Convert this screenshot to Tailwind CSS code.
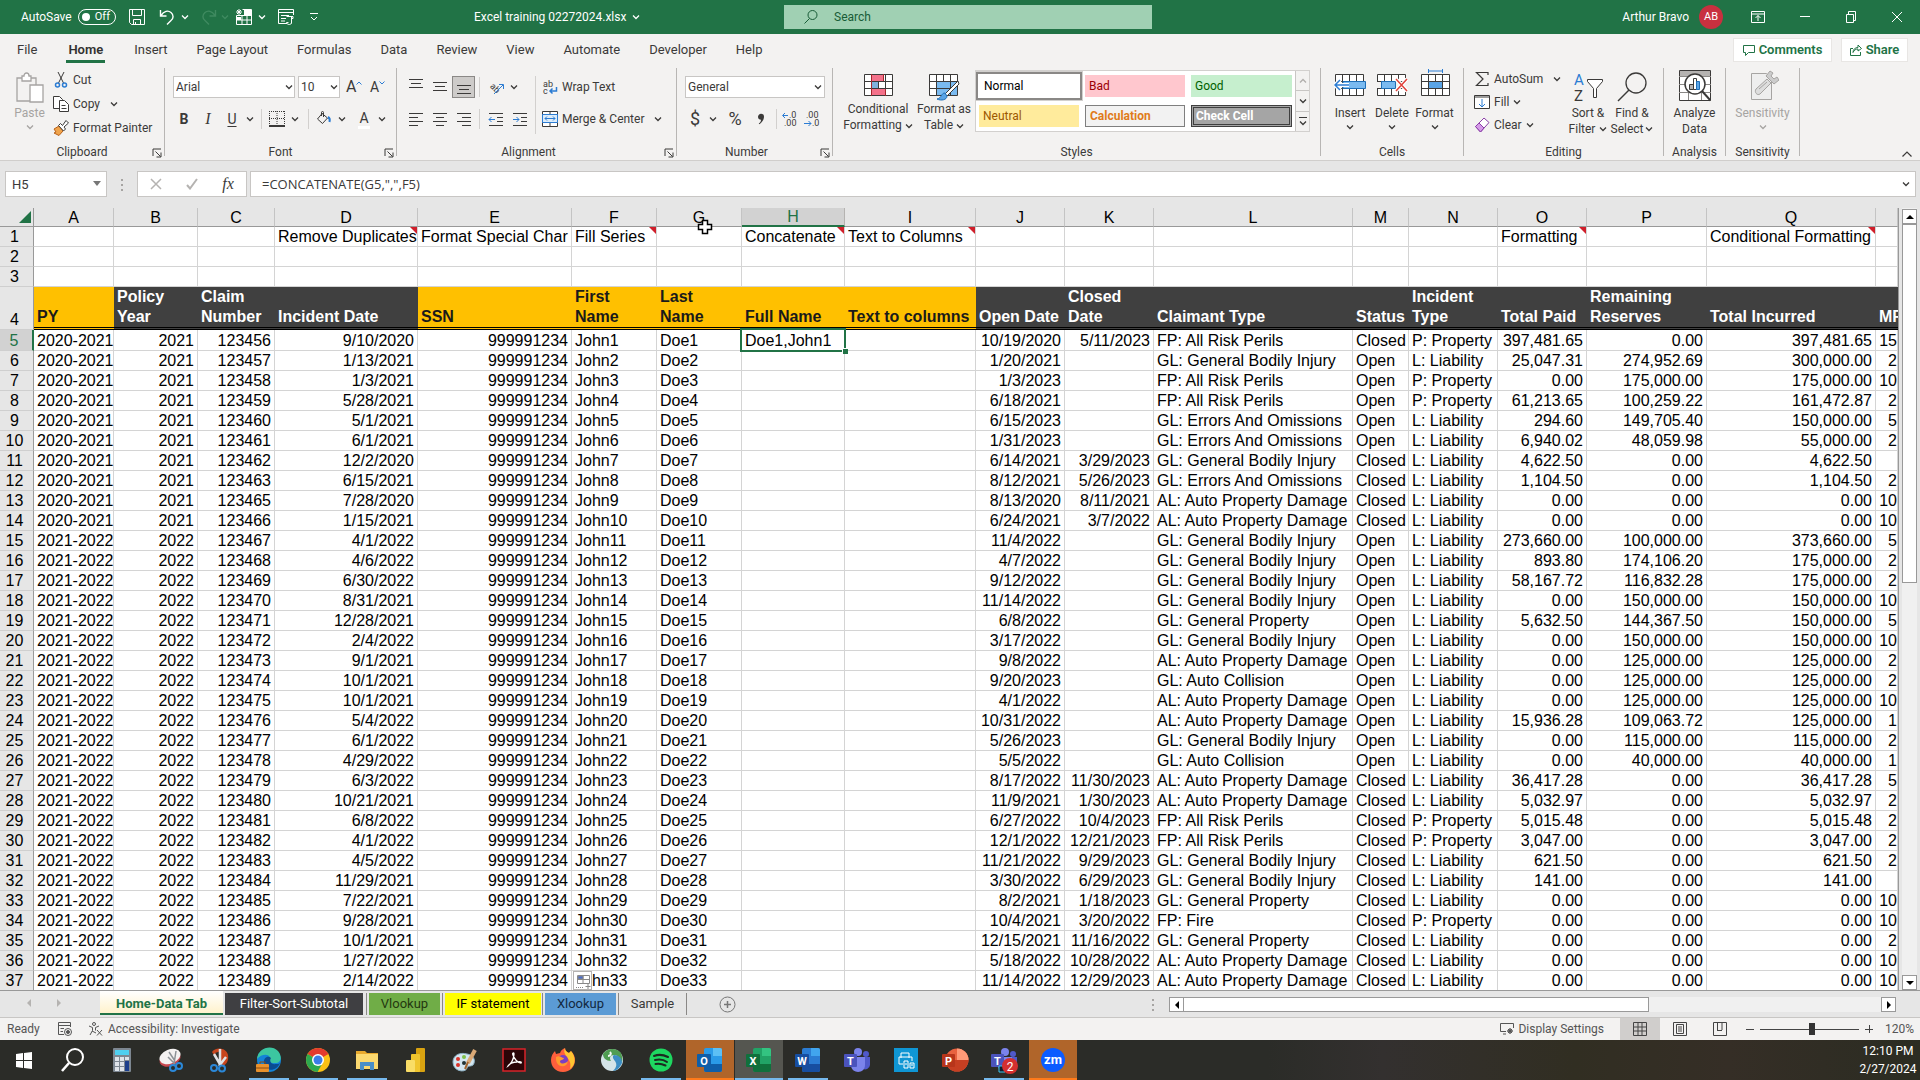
<!DOCTYPE html>
<html lang="en">
<head>
    <meta charset="UTF-8">
    <meta name="viewport" content="width=device-width, initial-scale=1.0">
    <title>Excel training 02272024.xlsx</title>
    <script src="https://cdn.jsdelivr.net/npm/@tailwindcss/browser@4"></script>
</head>
<body class="flex h-screen flex-col overflow-hidden bg-[#e6e6e6] font-[Roboto,'Open_Sans',sans-serif] text-xs text-[#3b3a39]">

    <!-- shared icons -->
    <svg class="hidden">
        <symbol id="chev" viewBox="0 0 8 6"><path d="M1 1.5l3 3 3-3" fill="none" stroke="currentColor" stroke-width="1.3"/></symbol>
        <symbol id="launch" viewBox="0 0 10 10"><path d="M1 8V1h8M3.500 3.500l5 5M9 4.500V9H4.500" fill="none" stroke="currentColor"/></symbol>
        <symbol id="al-left" viewBox="0 0 16 16"><path d="M1 2.500h14M1 6.500h9M1 10.500h14M1 14.500h9" stroke="currentColor"/></symbol>
        <symbol id="al-mid" viewBox="0 0 16 16"><path d="M1 2.500h14M4 6.500h8M1 10.500h14M4 14.500h8" stroke="currentColor"/></symbol>
        <symbol id="al-right" viewBox="0 0 16 16"><path d="M1 2.500h14M6 6.500h9M1 10.500h14M6 14.500h9" stroke="currentColor"/></symbol>
        <symbol id="grid" viewBox="0 0 30 24"><path d="M1.500 1.500h28v21h-28z" fill="#fff" stroke="#3b3a39"/><path d="M1 8.500h29M1 15.500h29M8.500 1v22M15.500 1v22M22.500 1v22" stroke="#3b3a39"/></symbol>
    </svg>

    <!-- title bar -->
    <header class="flex h-[34px] shrink-0 items-center bg-[#217346] text-white">
        <div class="flex w-[474px] items-center pl-[21px]">
            <label for="autosave" class="w-[57px]">AutoSave</label>
            <span class="relative flex h-4 w-[38px] items-center justify-end pr-1.5 text-[11px]">
                <input id="autosave" type="checkbox" role="switch" class="absolute inset-0 appearance-none rounded-full border border-white">
                <span class="absolute left-1 size-2 rounded-full bg-white"></span>Off
            </span>
            <button aria-label="Save" class="ml-[13px]"><svg class="size-4" viewBox="0 0 16 16" fill="none" stroke="#fff"><path d="M.5.5h15v15H2.500l-2-2zM3.500.5v6h9v-6M4.500 15.500v-5h7v5M6.500 13v2"/></svg></button>
            <button aria-label="Undo" class="ml-3.5"><svg class="size-4" viewBox="0 0 16 16" fill="none" stroke="#fff" stroke-width="1.4"><path d="M1.500 1v6h6M2 6.500C5 2 9 1 12 3.500s2.500 6 0 8L8 15.500"/></svg></button>
            <svg class="ml-1.5 h-1.5 w-2"><use href="#chev"/></svg>
            <button aria-label="Redo" disabled class="ml-3 text-[#3f8a60]"><svg class="size-4" viewBox="0 0 16 16" fill="none" stroke="currentColor" stroke-width="1.4"><path d="M14.500 1v6h-6M14 6.500C11 2 7 1 4 3.500s-2.500 6 0 8l4 4"/></svg></button>
            <svg class="ml-1 h-1.5 w-2 text-[#3f8a60]"><use href="#chev"/></svg>
            <button aria-label="Freeze panes" class="ml-[7px]"><svg class="size-4" viewBox="0 0 16 16" fill="none" stroke="#fff"><path d="M6.500.5h9v15h-15v-9h15M.5 11h15M6 6v9.500M11 6v9.500"/><path d="M8 1h7v5H8zM1 8h4v3H1z" fill="#fff" stroke="none"/><path d="M3 0v6M0 3h6M1 1l4 4M5 1L1 5"/></svg></button>
            <svg class="ml-1.5 h-1.5 w-2"><use href="#chev"/></svg>
            <button aria-label="Form" class="ml-3"><svg class="size-4" viewBox="0 0 16 16" fill="none" stroke="#fff"><path d="M9 14.500H.5V.5h15V6M.5 3.500h15M3 6.500h8M3 9.500h5M3 12h4M3 6v0M8.500 7.500h5v7l-2 1c-2 0-3-1-3-2h2M12 7.500h3v2h-2"/></svg></button>
            <button aria-label="Customize toolbar" class="ml-4"><svg class="h-2.5 w-2" viewBox="0 0 8 10" fill="none" stroke="#fff"><path d="M0 1.500h8M1 5l3 3 3-3"/></svg></button>
        </div>
        <button class="flex w-[310px] items-center gap-1.5">Excel training 02272024.xlsx <svg class="h-1.5 w-2"><use href="#chev"/></svg></button>
        <label class="flex h-6 w-[368px] items-center bg-[#a0d0b3] pl-5 text-[#185c37]">
            <svg class="mr-4 size-3.5" viewBox="0 0 14 14" fill="none" stroke="currentColor"><circle cx="8.500" cy="5" r="4.500"/><path d="M5.500 8.500L.5 13.500"/></svg>
            <input type="text" aria-label="Search" placeholder="Search" class="w-60 bg-transparent placeholder:text-[#185c37]">
        </label>
        <div class="ml-auto flex items-center">
            <span>Arthur Bravo</span>
            <span class="ml-2.5 flex size-6 items-center justify-center rounded-full bg-[#c8303f] text-[11px]">AB</span>
            <button aria-label="Ribbon display" class="ml-7"><svg class="h-3 w-3.5" viewBox="0 0 14 12" fill="none" stroke="#fff"><path d="M.5.5h13v11H.5zM.5 3h13M7 10V4.500M4.500 7L7 4.500 9.500 7"/></svg></button>
            <button aria-label="Minimize" class="ml-[35px]"><svg class="h-3 w-2.5" viewBox="0 0 10 12" stroke="#fff"><path d="M0 5.500h10"/></svg></button>
            <button aria-label="Restore" class="ml-9"><svg class="h-3 w-2.5" viewBox="0 0 10 12" fill="none" stroke="#fff"><path d="M.5 3.500h7v8h-7zM2.500 3V.5h7v9H8"/></svg></button>
            <button aria-label="Close" class="mr-[18px] ml-9"><svg class="h-3 w-2.5" viewBox="0 0 10 12" stroke="#fff"><path d="M0 1l10 10M10 1L0 11"/></svg></button>
        </div>
    </header>

    <!-- ribbon tabs -->
    <nav class="flex h-[34px] shrink-0 items-center bg-[#f3f2f1] pb-0.5 pl-[17px] text-[13px]">
        <div class="flex items-center gap-[29px]">
            <a href="#">File</a>
            <a href="#" class="relative px-0.5 font-semibold text-[#323130]">Home<span class="absolute inset-x-0 -bottom-1 h-[3px] bg-[#217346]"></span></a>
            <a href="#">Insert</a>
            <a href="#">Page Layout</a>
            <a href="#">Formulas</a>
            <a href="#">Data</a>
            <a href="#">Review</a>
            <a href="#">View</a>
            <a href="#">Automate</a>
            <a href="#">Developer</a>
            <a href="#">Help</a>
        </div>
        <div class="mr-3 ml-auto flex gap-[9px] font-semibold text-[#217346]">
            <button class="flex h-6 w-[99px] items-center justify-center gap-1 border border-[#e8e6e4] bg-white"><svg class="size-3" viewBox="0 0 12 12" fill="none" stroke="currentColor"><path d="M.5 1.500h11v7h-6l-3 3v-3h-2z"/></svg>Comments</button>
            <button class="flex h-6 w-[67px] items-center justify-center gap-1 border border-[#e8e6e4] bg-white"><svg class="size-3" viewBox="0 0 12 12" fill="none" stroke="currentColor"><path d="M3 4.500H.5v7h10V8M3 8.500c0-3 2-5 5-5V1l3.500 3.500L8 7V5C6 5 4 6 3 8.500"/></svg>Share</button>
        </div>
    </nav>

    <!-- ribbon -->
    <section class="relative flex h-[93px] shrink-0 border-b border-[#d0cecc] bg-[#f3f2f1]">
        <!-- clipboard -->
        <div class="flex w-[164px] flex-col">
            <div class="flex h-[76px] pl-[14px]">
                <button disabled class="flex w-[31px] flex-col items-center pt-1 text-[#a6a4a2]">
                    <svg class="h-8 w-7" viewBox="0 0 28 32" fill="#f3f2f1" stroke="currentColor" stroke-width="1.300"><path d="M1 6h19v23H1z"/><path d="M6 9V4h2c0-4 5-4 5 0h2v5z" fill="#fff"/><path d="M14 13h13v17H14z" fill="#fff"/></svg>
                    <span class="mt-px">Paste</span>
                    <svg class="mt-[3px] h-1.5 w-2"><use href="#chev"/></svg>
                </button>
                <div class="ml-2 flex flex-col">
                    <button class="flex h-6 items-center"><svg class="mr-1 h-4 w-4" viewBox="0 0 16 16" fill="none" stroke="#3b3a39"><path d="M5 0l5.500 11M11 0L5.500 11"/><g stroke="#2b7cd3" stroke-width="1.500"><circle cx="4.500" cy="13" r="2"/><circle cx="11.500" cy="13" r="2"/></g></svg>Cut</button>
                    <button class="flex h-6 items-center"><svg class="mr-1 h-4 w-4" viewBox="0 0 16 16" fill="#fff" stroke="#3b3a39"><path d="M.5.5h6l3 3v9h-9z"/><path d="M6.500 4.500h5l4 4v7h-9zM8.500 9.500h4M8.500 12.500h5"/></svg>Copy<svg class="ml-2.5 h-1.5 w-2"><use href="#chev"/></svg></button>
                    <button class="flex h-6 items-center"><svg class="mr-1 h-4 w-4" viewBox="0 0 16 16"><path d="M1 9l5-3 4 5-4 4.500L1 13l2-1z" fill="#f0a44c" stroke="#b7621b"/><path d="M5.500 5.500l2-2 2 2 3.500-5L15.500 3 11 7l1.500 2-2 2z" fill="#fff" stroke="#3b3a39"/></svg>Format Painter</button>
                </div>
            </div>
            <div class="relative text-center leading-4">Clipboard<svg class="absolute top-1 right-0.5 size-2.5"><use href="#launch"/></svg></div>
        </div>
        <span class="h-[88px] w-px bg-[#b8b6b4]"></span>

        <!-- font -->
        <div class="flex w-[231px] flex-col">
            <div class="h-[76px] pt-2">
                <div class="flex items-center pl-2">
                    <span class="relative"><select aria-label="Font" class="block h-[22px] w-[122px] appearance-none border border-[#c8c6c4] bg-white px-0.5"><option>Arial</option></select><svg class="absolute top-2 right-0.5 h-1.5 w-2"><use href="#chev"/></svg></span>
                    <span class="relative ml-[3px]"><select aria-label="Font size" class="block h-[22px] w-[42px] appearance-none border border-[#c8c6c4] bg-white px-0.5"><option>10</option></select><svg class="absolute top-2 right-0.5 h-1.5 w-2"><use href="#chev"/></svg></span>
                    <button aria-label="Increase font size" class="ml-1.5 flex w-5 text-base leading-5">A<svg class="mt-1 h-1 w-1.5" viewBox="0 0 6 4" fill="none" stroke="#2b7cd3"><path d="M.5 3.500L3 1l2.500 2.500"/></svg></button>
                    <button aria-label="Decrease font size" class="ml-1 flex w-5 text-sm leading-5">A<svg class="mt-1 h-1 w-1.5" viewBox="0 0 6 4" fill="none" stroke="#2b7cd3"><path d="M.5.5L3 3 5.500.5"/></svg></button>
                </div>
                <div class="mt-[9px] flex h-6 items-center pl-[7px]">
                    <button class="w-6 text-sm font-bold">B</button>
                    <button class="w-6 font-['Liberation_Serif',serif] text-base italic">I</button>
                    <button class="w-6 text-sm underline underline-offset-2">U</button>
                    <svg class="h-1.5 w-3"><use href="#chev"/></svg>
                    <span class="mx-[5px] h-5 w-px bg-[#d2d0ce]"></span>
                    <button aria-label="Borders" class="flex w-5 justify-center"><svg class="size-4" viewBox="0 0 16 16" stroke="#3b3a39" fill="none"><path d="M.5 0v14M15.500 0v14M8 0v14M0 .5h16M0 7.500h16" stroke-dasharray="1 1"/><path d="M0 15h16" stroke-width="2"/></svg></button>
                    <svg class="h-1.5 w-4"><use href="#chev"/></svg>
                    <span class="mx-[5px] h-5 w-px bg-[#d2d0ce]"></span>
                    <button aria-label="Fill color" class="flex w-5 justify-center"><svg class="size-4" viewBox="0 0 16 16" fill="none" stroke="#3b3a39"><path d="M5.500 2l6 5-5 5.500L1.500 8l5-6M5.500 5V1.500c0-1.500 2-1.500 2 0V6"/><path d="M12 6c2 1 2 3 1.500 5" stroke="#2b7cd3" stroke-width="2"/></svg></button>
                    <svg class="h-1.5 w-4"><use href="#chev"/></svg>
                    <button aria-label="Font color" class="ml-1 flex w-5 flex-col items-center text-sm leading-4">A<span class="h-[3px] w-3 bg-white"></span></button>
                    <svg class="h-1.5 w-4"><use href="#chev"/></svg>
                </div>
            </div>
            <div class="relative pl-4 pr-4 text-center leading-4">Font<svg class="absolute top-1 right-0.5 size-2.5"><use href="#launch"/></svg></div>
        </div>
        <span class="h-[88px] w-px bg-[#b8b6b4]"></span>

        <!-- alignment -->
        <div class="flex w-[279px] flex-col">
            <div class="flex h-[76px] pt-2 pl-[7px]">
                <div class="flex flex-col">
                    <div class="flex h-[22px] items-center">
                        <button aria-label="Top align" class="flex h-full w-6 justify-center"><svg class="size-4" viewBox="0 0 16 16" stroke="currentColor"><path d="M1 3.500h14M3 7.500h10M1 11.500h14"/></svg></button>
                        <button aria-label="Middle align" class="flex h-full w-6 items-center justify-center"><svg class="size-4" viewBox="0 0 16 16" stroke="currentColor"><path d="M1 3.500h14M3 7.500h10M1 11.500h14"/></svg></button>
                        <button aria-label="Bottom align" class="flex h-full w-[23px] items-end justify-center border border-[#8a8886] bg-[#cdcbc9]"><svg class="size-4" viewBox="0 0 16 16" stroke="currentColor"><path d="M1 4.500h14M3 8.500h10M1 12.500h14"/></svg></button>
                        <span class="mx-1 h-5 w-px bg-[#d2d0ce]"></span>
                        <button aria-label="Orientation" class="flex w-6 justify-center"><svg class="h-5 w-[18px]" viewBox="0 0 18 20"><text x="4" y="12" font-size="9" transform="rotate(45 6 9)" fill="#3b3a39">ab</text><path d="M7 17L16 8M12 7.500h4.500V12" fill="none" stroke="#2b7cd3"/></svg></button>
                        <svg class="h-1.5 w-3"><use href="#chev"/></svg>
                    </div>
                    <div class="mt-[9px] flex h-6 items-center">
                        <button aria-label="Align left" class="flex w-6 justify-center"><svg class="size-4"><use href="#al-left"/></svg></button>
                        <button aria-label="Center" class="flex w-6 justify-center"><svg class="size-4"><use href="#al-mid"/></svg></button>
                        <button aria-label="Align right" class="flex w-[23px] justify-center"><svg class="size-4"><use href="#al-right"/></svg></button>
                        <span class="mx-1 h-5 w-px bg-[#d2d0ce]"></span>
                        <button aria-label="Decrease indent" class="flex w-6 justify-center"><svg class="size-4" viewBox="0 0 16 16" fill="none" stroke="currentColor"><path d="M1 2.500h14M9 6.500h6M9 10.500h6M1 14.500h14"/><path d="M7 8.500H1M3.500 6L1 8.500 3.500 11" stroke="#2b7cd3"/></svg></button>
                        <button aria-label="Increase indent" class="flex w-6 justify-center"><svg class="size-4" viewBox="0 0 16 16" fill="none" stroke="currentColor"><path d="M1 2.500h14M9 6.500h6M9 10.500h6M1 14.500h14"/><path d="M1 8.500h6M4.500 6L7 8.500 4.500 11" stroke="#2b7cd3"/></svg></button>
                    </div>
                </div>
                <span class="mr-1.5 ml-[3px] h-[58px] w-px bg-[#d2d0ce]"></span>
                <div class="flex flex-col">
                    <button class="flex h-[22px] items-center"><svg class="mr-1 h-5 w-4" viewBox="0 0 16 20"><text x="1" y="10" font-size="9" fill="#3b3a39">ab</text><text x="1" y="17" font-size="9" fill="#3b3a39">c</text><path d="M14.500 10v4H8M10.500 11.500L8 14l2.500 2.500" fill="none" stroke="#2b7cd3" stroke-width="1.500"/></svg>Wrap Text</button>
                    <button class="mt-[9px] flex h-6 items-center"><svg class="mr-1 size-4" viewBox="0 0 16 16" fill="#fff" stroke="#3b3a39"><path d="M.5.5h15v15H.5zM8 0v16"/><path d="M.5 3.500h15v8H.5z" stroke="#2b7cd3" fill="#dcecfa"/><path d="M3 7.500h10M5 5.500l-2 2 2 2M11 5.500l2 2-2 2" stroke="#2b7cd3" fill="none"/></svg>Merge &amp; Center<svg class="ml-2.5 h-1.5 w-2"><use href="#chev"/></svg></button>
                </div>
            </div>
            <div class="relative pr-4 text-center leading-4">Alignment<svg class="absolute top-1 right-0.5 size-2.5"><use href="#launch"/></svg></div>
        </div>
        <span class="h-[88px] w-px bg-[#b8b6b4]"></span>

        <!-- number -->
        <div class="flex w-[155px] flex-col">
            <div class="h-[76px] pt-2 pl-2">
                <span class="relative block w-[140px]"><select aria-label="Number format" class="block h-[22px] w-full appearance-none border border-[#c8c6c4] bg-white px-0.5"><option>General</option></select><svg class="absolute top-2 right-[3px] h-1.5 w-2"><use href="#chev"/></svg></span>
                <div class="mt-[9px] flex h-6 items-center text-lg">
                    <button class="w-5">$</button>
                    <svg class="h-1.5 w-4"><use href="#chev"/></svg>
                    <button class="ml-1 w-5">%</button>
                    <button aria-label="Comma style" class="ml-1 flex w-6 justify-center"><svg class="h-3 w-1.5" viewBox="0 0 8 14" fill="#3b3a39"><path d="M4 0c3 0 4 2 4 4 0 4-3 8-6 10l-1-1c2-1 3-3 3-5C2 8 0 7 0 4c0-2 2-4 4-4z"/></svg></button>
                    <span class="mr-1 ml-[3px] h-5 w-px bg-[#d2d0ce]"></span>
                    <button aria-label="Increase decimal" class="w-[22px]"><svg class="h-5 w-5" viewBox="0 0 20 20"><path d="M7 6.500H2M4 4L1.500 6.500 4 9" fill="none" stroke="#2b7cd3"/><text x="8" y="9" font-size="9" fill="#3b3a39">.0</text><text x="3" y="17" font-size="9" fill="#3b3a39">.00</text></svg></button>
                    <button aria-label="Decrease decimal" class="w-[22px]"><svg class="h-5 w-5" viewBox="0 0 20 20"><path d="M1 14.500h7M5.500 12L8 14.500 5.500 17" fill="none" stroke="#2b7cd3"/><text x="3" y="9" font-size="9" fill="#3b3a39">.00</text><text x="9" y="17" font-size="9" fill="#3b3a39">.0</text></svg></button>
                </div>
            </div>
            <div class="relative pr-4 text-center leading-4">Number<svg class="absolute top-1 right-0.5 size-2.5"><use href="#launch"/></svg></div>
        </div>
        <span class="h-[88px] w-px bg-[#b8b6b4]"></span>

        <!-- styles -->
        <div class="flex w-[487px] flex-col">
            <div class="flex h-[76px]">
                <button class="ml-2.5 flex w-[70px] flex-col items-center pt-[5px] leading-4">
                    <svg class="mb-1 h-6 w-[30px] shrink-0" viewBox="0 0 30 24"><use href="#grid"/><path d="M8 2h12v6H8zM8 16h14v6H8z" fill="#f4718a"/><path d="M8 9h7v6H8z" fill="#7fb2dd"/><path d="M8.500 1v22M20.500 1v7M22.500 16v7" stroke="#a4262c"/></svg>
                    <span>Conditional Formatting <svg class="inline h-1.5 w-2"><use href="#chev"/></svg></span>
                </button>
                <button class="flex w-[62px] flex-col items-center pt-[5px] leading-4">
                    <svg class="h-7 w-8 shrink-0" viewBox="0 0 32 28"><use href="#grid" width="30" height="24"/><path d="M9 9h13v6H9zM9 16h13v6H9zM23 9h6v13h-6z" fill="#7abaf0"/><path d="M30 8L17 21l2 2L31 11z" fill="#fff" stroke="#3b3a39"/><path d="M17 20c-4 0-3 5-8 6 4 2 10 1 10-3z" fill="#5aa4e6" stroke="#1e6fb8"/></svg>
                    <span>Format as Table <svg class="inline h-1.5 w-2"><use href="#chev"/></svg></span>
                </button>
                <div class="mt-0.5 flex h-[62px] border border-[#d2d0ce] bg-white">
                    <div class="grid grid-cols-[106px_106px_107px] grid-rows-[30px_30px] items-center text-left">
                        <button class="h-7 border-2 border-[#8a8886] px-1.5 text-left text-black outline outline-[#d2d0ce]">Normal</button>
                        <button class="mx-[3px] h-[22px] bg-[#ffc7ce] px-1 text-left text-[#9c0006]">Bad</button>
                        <button class="mx-[3px] h-[22px] bg-[#c6efce] px-1 text-left text-[#006100]">Good</button>
                        <button class="mx-[3px] h-[22px] bg-[#ffeb9c] px-1 text-left text-[#9c5700]">Neutral</button>
                        <button class="mx-[3px] h-[22px] border border-[#7f7f7f] bg-[#f2f2f2] px-1 text-left font-bold text-[#e07b1a]">Calculation</button>
                        <button class="mx-[3px] h-[22px] border-[3px] border-double border-[#3f3f3f] bg-[#a5a5a5] px-0.5 text-left leading-4 font-bold text-white">Check Cell</button>
                    </div>
                    <div class="flex w-[14px] flex-col border-l border-[#c8c6c4]">
                        <button aria-label="Row up" class="flex flex-1 items-center justify-center bg-[#f3f2f1] text-[#b0aeac]"><svg class="h-1.5 w-2 rotate-180"><use href="#chev"/></svg></button>
                        <button aria-label="Row down" class="flex flex-1 items-center justify-center border-y border-[#c8c6c4] bg-[#f3f2f1]"><svg class="h-1.5 w-2"><use href="#chev"/></svg></button>
                        <button aria-label="More styles" class="flex flex-1 flex-col items-center justify-center bg-[#f3f2f1]"><span class="mb-0.5 h-px w-2 bg-[#3b3a39]"></span><svg class="h-1.5 w-2"><use href="#chev"/></svg></button>
                    </div>
                </div>
            </div>
            <div class="text-center leading-4">Styles</div>
        </div>
        <span class="h-[88px] w-px bg-[#b8b6b4]"></span>

        <!-- cells -->
        <div class="flex w-[142px] flex-col">
            <div class="flex h-[76px] pl-2 leading-4">
                <button class="flex w-[42px] flex-col items-center pt-[5px]"><svg class="mb-2 h-6 w-8" viewBox="0 0 32 24"><use href="#grid" width="30" height="24"/><path d="M9 8.500h22.500v7H9z" fill="#7abaf0" stroke="#1e6fb8"/><path d="M15 12H1M6 7l-5 5 5 5" fill="none" stroke="#fff" stroke-width="4"/><path d="M15 12H1M6 7l-5 5 5 5" fill="none" stroke="#2b7cd3" stroke-width="1.500"/></svg>Insert<svg class="mt-[3px] h-1.5 w-2"><use href="#chev"/></svg></button>
                <button class="flex w-[42px] flex-col items-center pt-[5px]"><svg class="mb-2 h-6 w-8" viewBox="0 0 32 24"><use href="#grid" width="30" height="24"/><path d="M0 9h32v6H0z" fill="#f3f2f1"/><path d="M5.500 8.500h14v7h-14z" fill="#7abaf0" stroke="#1e6fb8"/><path d="M20 6l11 12M31 6L20 18" stroke="#fff" stroke-width="4"/><path d="M20 6l11 12M31 6L20 18" stroke="#e0413a" stroke-width="1.500"/></svg>Delete<svg class="mt-[3px] h-1.5 w-2"><use href="#chev"/></svg></button>
                <button class="flex w-[43px] flex-col items-center"><svg class="mb-2 h-[29px] w-[30px]" viewBox="0 0 30 29"><path d="M8.500 1v4M22.500 1v4M8 3h15" stroke="#2b7cd3"/><use href="#grid" y="5" width="30" height="24"/><path d="M9 14h13v6H9z" fill="#5aa4e6"/></svg>Format<svg class="mt-[3px] h-1.5 w-2"><use href="#chev"/></svg></button>
            </div>
            <div class="text-center leading-4">Cells</div>
        </div>
        <span class="h-[88px] w-px bg-[#b8b6b4]"></span>

        <!-- editing -->
        <div class="flex w-[199px] flex-col">
            <div class="flex h-[76px] pl-2.5 leading-4">
                <div class="flex w-[92px] flex-col">
                    <button class="flex h-[22px] items-center"><svg class="mr-1 size-4" viewBox="0 0 16 16" fill="none" stroke="currentColor" stroke-width="1.200"><path d="M14 4V1.500H2.500L9 8l-6.500 6.500H14V12"/></svg>AutoSum<svg class="ml-2.5 h-1.5 w-2"><use href="#chev"/></svg></button>
                    <button class="flex h-6 items-center"><svg class="mr-1 size-4" viewBox="0 0 16 16" fill="#fff" stroke="currentColor"><path d="M.5 1.500h15v13H.5zM0 3h16"/><path d="M8 5v8M5 10l3 3 3-3" fill="none" stroke="#2b7cd3"/></svg>Fill<svg class="ml-1 h-1.5 w-2"><use href="#chev"/></svg></button>
                    <button class="flex h-[22px] items-center"><svg class="mr-1 size-4" viewBox="0 0 16 16" fill="#fff" stroke="#8a3ea8"><path d="M1.500 9.500L10 1l5 4.500-8.500 9.500z"/><path d="M1.500 9.500L5 6l5 5-3.500 4z" fill="#d59be8"/></svg>Clear<svg class="ml-1 h-1.5 w-2"><use href="#chev"/></svg></button>
                </div>
                <button class="flex w-[44px] flex-col items-center pt-1"><svg class="mb-[3px] h-[30px] w-8 shrink-0" viewBox="0 0 32 30"><text x="2" y="13" font-size="15" fill="#2b7cd3">A</text><text x="2" y="29" font-size="15" fill="#3b3a39">Z</text><path d="M15.500 7.500h15v2l-6 7v9h-3v-9l-6-7z" fill="#fff" stroke="#3b3a39"/></svg><span class="text-nowrap">Sort &amp;</span><span class="flex items-center gap-1">Filter <svg class="h-1.5 w-2"><use href="#chev"/></svg></span></button>
                <button class="flex w-[44px] flex-col items-center pt-1"><svg class="mb-[3px] h-[30px] w-8 shrink-0" viewBox="0 0 32 30" fill="none" stroke="#3b3a39"><circle cx="20" cy="11" r="10" stroke-width="1.300"/><path d="M13 18L2 29" stroke-width="1.500"/></svg><span class="text-nowrap">Find &amp;</span><span class="flex items-center gap-0.5">Select <svg class="h-1.5 w-2"><use href="#chev"/></svg></span></button>
            </div>
            <div class="text-center leading-4">Editing</div>
        </div>
        <span class="h-[88px] w-px bg-[#b8b6b4]"></span>

        <!-- analysis -->
        <div class="flex w-[61px] flex-col">
            <button class="flex h-[76px] flex-col items-center pt-0.5 leading-4"><svg class="mb-[3px] h-8 w-8 shrink-0" viewBox="0 0 32 32"><path d="M.5.5h31v30H.5z" fill="#fff" stroke="#3b3a39"/><path d="M1 1h30v5H1z" fill="#b5b3b1"/><path d="M0 6.500h32M0 14.500h32M0 22.500h32M9.500 6v24M22.500 6v24" stroke="#8a8886"/><circle cx="16" cy="14" r="10" fill="#fff" stroke="#3b3a39" stroke-width="1.500"/><path d="M10.500 14.500h4v5h-4z" fill="#b5b3b1" stroke="#3b3a39"/><path d="M14.500 8.500h3v11h-3z" fill="#fff" stroke="#3b3a39"/><path d="M17.500 11.500h3v8h-3z" fill="#5aa4e6" stroke="#1e6fb8"/><path d="M23 21l8.500 9.500" stroke="#3b3a39" stroke-width="2"/></svg><span>Analyze<br>Data</span></button>
            <div class="text-center leading-4">Analysis</div>
        </div>
        <span class="h-[88px] w-px bg-[#b8b6b4]"></span>

        <!-- sensitivity -->
        <div class="flex w-[73px] flex-col">
            <button disabled class="flex h-[76px] flex-col items-center pt-0.5 leading-4 text-[#a6a4a2]"><svg class="mb-[3px] h-8 w-8" viewBox="0 0 32 32" fill="#eee" stroke="currentColor"><path d="M4.500 3.500h15l5 5v21h-20z"/><path d="M9 19l11-10 4 4-11 11c-3 2-6-2-4-5zM12 19l8-7" fill="#ddd"/><path d="M19 6l4-5 3 2-2 3 3 3 3-2 2 3-5 4z" fill="#ccc"/></svg>Sensitivity<svg class="mt-[3px] h-1.5 w-2"><use href="#chev"/></svg></button>
            <div class="text-center leading-4">Sensitivity</div>
        </div>
        <span class="h-[88px] w-px bg-[#b8b6b4]"></span>
        <button aria-label="Collapse ribbon" class="mt-auto mr-2 mb-0.5 ml-auto"><svg class="h-2 w-2.5" viewBox="0 0 10 8" fill="none" stroke="currentColor" stroke-width="1.200"><path d="M.5 6.500L5 2l4.500 4.500"/></svg></button>
    </section>

    <!-- formula bar -->
    <section class="flex h-[47px] shrink-0 items-start pt-2.5 pr-1 pl-[5px] text-[13px]">
        <div class="relative">
            <input type="text" aria-label="Name box" value="H5" class="block h-[26px] w-[102px] border border-[#c8c6c4] bg-white px-1.5">
            <svg class="absolute top-2.5 right-1.5 h-1.5 w-2" viewBox="0 0 8 6" fill="#777"><path d="M0 0h8L4 5z"/></svg>
        </div>
        <svg class="mx-3.5 mt-2 h-3 w-0.5" viewBox="0 0 2 12" fill="#a6a4a2"><path d="M0 0h2v2H0zM0 5h2v2H0zM0 10h2v2H0z"/></svg>
        <div class="flex h-[26px] w-[110px] items-center justify-around border border-[#c8c6c4] bg-white">
            <button aria-label="Cancel"><svg class="size-3" viewBox="0 0 12 12" stroke="#b5b3b1" stroke-width="1.500"><path d="M1 1l10 10M11 1L1 11"/></svg></button>
            <button aria-label="Enter"><svg class="size-3" viewBox="0 0 12 12" fill="none" stroke="#b5b3b1" stroke-width="2"><path d="M1 7l3 3.500L11 1"/></svg></button>
            <button class="font-['Liberation_Serif',serif] text-base leading-5 italic">fx</button>
        </div>
        <div class="relative ml-[3px] flex-1">
            <input type="text" aria-label="Formula" value='=CONCATENATE(G5,",",F5)' class="block h-[26px] w-full border border-[#c8c6c4] bg-white px-[11px] font-['Open_Sans',sans-serif]">
            <svg class="absolute top-2.5 right-1.5 h-1.5 w-2 stroke-2"><use href="#chev"/></svg>
        </div>
    </section>

    <!-- worksheet -->
    <main class="relative flex min-h-0 flex-1 border-b border-[#999]">
        <div class="min-w-0 flex-1 overflow-hidden border-r border-[#999] font-['Liberation_Sans',Arial,sans-serif] text-base text-black">
            <table class="w-full table-fixed border-separate border-spacing-0">
                <colgroup>
                    <col class="w-[34px]"><col class="w-[80px]"><col class="w-[84px]"><col class="w-[77px]"><col class="w-[143px]"><col class="w-[154px]"><col class="w-[85px]"><col class="w-[85px]"><col class="w-[103px]"><col class="w-[131px]"><col class="w-[89px]"><col class="w-[89px]"><col class="w-[199px]"><col class="w-[56px]"><col class="w-[89px]"><col class="w-[89px]"><col class="w-[120px]"><col class="w-[169px]"><col>
                </colgroup>
                <thead id="letters"></thead>
                <tbody id="cells"></tbody>
            </table>
        </div>
        <div class="mx-[3px] flex w-[15px] flex-col bg-[#f0f0f0] pt-px">
            <button aria-label="Scroll up" class="flex h-[15px] items-center justify-center border border-[#999] bg-white"><svg class="h-1.5 w-2" viewBox="0 0 8 6"><path d="M0 5h8L4 1z"/></svg></button>
            <span class="h-[46%] border border-[#999] bg-white"></span>
            <button aria-label="Scroll down" class="mt-auto flex h-[15px] items-center justify-center border border-[#999] bg-white"><svg class="h-1.5 w-2" viewBox="0 0 8 6"><path d="M0 1h8L4 5z"/></svg></button>
        </div>
        <svg class="absolute top-[11px] left-[697px] size-4" viewBox="0 0 16 16" fill="#fff" stroke="#000" stroke-width="1.500"><path d="M5.500 1.500h5v4h4v5h-4v4h-5v-4h-4v-5h4z"/></svg>
    </main>

    <!-- sheet tabs -->
    <section class="flex h-[27px] shrink-0 items-start border-b border-[#c8c6c4] text-[13px] leading-[22px]">
        <div class="flex w-[100px] gap-5 pt-2 pl-[26px]">
            <svg class="h-2 w-2" viewBox="0 0 8 8" fill="#b5b3b1"><path d="M5 0v8L1 4z"/></svg>
            <svg class="h-2 w-2" viewBox="0 0 8 8" fill="#b5b3b1"><path d="M3 0v8l4-4z"/></svg>
        </div>
        <button class="h-6 w-[123px] border-b-2 border-[#217346] bg-linear-to-b from-white to-[#fff2cc] pt-0.5 font-bold text-[#217346]">Home-Data Tab</button>
        <button class="mt-0.5 mr-[3px] ml-0.5 h-[22px] w-[138px] bg-[#3f3f42] text-white">Filter-Sort-Subtotal</button>
        <button class="mt-0.5 h-[22px] border-l border-[#8a8886] pl-0.5 text-[#24380f]"><span class="block w-[71px] bg-[#70ad47]">Vlookup</span></button>
        <button class="mt-0.5 ml-0.5 h-[22px] border-l border-[#8a8886] pl-0.5 text-black"><span class="block w-[96px] bg-[#ffff00]">IF statement</span></button>
        <button class="mt-0.5 ml-px h-[22px] border-l border-[#8a8886] pl-0.5 text-[#12283f]"><span class="block w-[71px] bg-[#5b9bd5]">Xlookup</span></button>
        <button class="mt-0.5 ml-0.5 h-[22px] w-[69px] border-x border-[#8a8886]">Sample</button>
        <button aria-label="New sheet" class="mt-[5px] ml-8"><svg class="size-[17px]" viewBox="0 0 17 17" fill="none" stroke="#777"><circle cx="8.500" cy="8.500" r="7.500"/><path d="M8.500 5v7M5 8.500h7" stroke-width="1.500"/></svg></button>
        <svg class="mt-2 mr-[15px] ml-auto h-3 w-0.5" viewBox="0 0 2 12" fill="#a6a4a2"><path d="M0 0h2v2H0zM0 5h2v2H0zM0 10h2v2H0z"/></svg>
        <div class="mt-1.5 mr-6 flex h-[15px] w-[727px] bg-[#f0f0f0]">
            <button aria-label="Scroll left" class="flex w-[15px] items-center justify-center border border-[#999] bg-white"><svg class="h-2 w-1.5" viewBox="0 0 6 8"><path d="M5 0v8L1 4z"/></svg></button>
            <span class="w-[64%] border-y border-r border-[#999] bg-white"></span>
            <button aria-label="Scroll right" class="ml-auto flex w-[15px] items-center justify-center border border-[#999] bg-white"><svg class="h-2 w-1.5" viewBox="0 0 6 8"><path d="M1 0v8l4-4z"/></svg></button>
        </div>
    </section>

    <!-- status bar -->
    <section class="flex h-[22px] shrink-0 items-center bg-[#f3f2f1] pl-[7px] text-[#555]">
        <span class="w-[51px]">Ready</span>
        <svg class="mr-4 size-3.5" viewBox="0 0 14 14" fill="none" stroke="currentColor"><path d="M6 12.500H.5V.5h12V5M0 3.500h13M2.500 6.500H6M2.500 9.500H5"/><circle cx="10" cy="10" r="3.500"/><circle cx="10" cy="10" r="1.500" fill="currentColor"/></svg>
        <button class="flex items-center gap-1"><svg class="h-3.5 w-4" viewBox="0 0 16 14" fill="none" stroke="currentColor"><circle cx="6" cy="2" r="1.500"/><path d="M1 4l3.500 1.500v3L2 13M11 4L7.500 5.500v3M4 9l4 2M9 8l5 5.500M14 8l-5 5.500"/></svg>Accessibility: Investigate</button>
        <button class="ml-auto flex items-center gap-1"><svg class="h-3 w-3.5" viewBox="0 0 14 12" fill="none" stroke="currentColor"><path d="M6 8.500H.5v-8h13V5M3 11h3"/><circle cx="10" cy="8" r="2"/><path d="M10 5v6M7 8h6M8 6l4 4M12 6l-4 4"/></svg>Display Settings</button>
        <button aria-label="Normal view" class="ml-4 flex h-full w-10 items-center justify-center bg-[#d0cecc]"><svg class="size-3.5" viewBox="0 0 14 14" fill="none" stroke="#444"><path d="M.5.5h13v13H.5zM0 5h14M0 9h14M5 0v14M9 0v14"/></svg></button>
        <button aria-label="Page layout view" class="flex w-10 justify-center"><svg class="size-3.5" viewBox="0 0 14 14" fill="none" stroke="#444"><path d="M.5.5h13v13H.5zM3.500 2.500h7v9h-7zM5 5h4M5 7h4M5 9h4"/></svg></button>
        <button aria-label="Page break view" class="flex w-10 justify-center"><svg class="size-3.5" viewBox="0 0 14 14" fill="none" stroke="#444"><path d="M.5.5h13v13H.5zM4.500 0v8M9 0v8M4 8.500h5"/></svg></button>
        <button aria-label="Zoom out" class="ml-1.5"><svg class="h-2 w-2" viewBox="0 0 8 8" stroke="#444"><path d="M0 4.500h8"/></svg></button>
        <input type="range" aria-label="Zoom" value="53" class="mx-1.5 h-px w-[99px] appearance-none bg-[#444] [&::-webkit-slider-thumb]:h-3 [&::-webkit-slider-thumb]:w-1.5 [&::-webkit-slider-thumb]:appearance-none [&::-webkit-slider-thumb]:bg-[#333]">
        <button aria-label="Zoom in"><svg class="h-2 w-2" viewBox="0 0 8 8" stroke="#444"><path d="M0 4.500h8M4.500 0v8"/></svg></button>
        <span class="mr-1.5 ml-3">120%</span>
    </section>

    <!-- taskbar -->
    <footer class="flex h-10 shrink-0 bg-[linear-gradient(90deg,#2b2c28_0%,#2b2c28_66%,#33302f_72%,#312e22_82%,#352e26_90%,#2b2c22_100%)] text-white">
        <div id="taskbar" class="flex"></div>
        <div class="ml-auto w-16 text-center leading-[18px]"><div class="pt-0.5">12:10 PM</div><div>2/27/2024</div></div>
    </footer>

    <script>
        // number and date columns are right aligned
        const rightCols = [1, 2, 3, 4, 9, 10, 14, 15, 16, 17];
        const letters = 'ABCDEFGHIJKLMNOPQ'.split('').concat('');
        const notes = ['', '', '', 'Remove Duplicates', 'Format Special Char', 'Fill Series', '', 'Concatenate', 'Text to Columns', '', '', '', '', '', 'Formatting', '', 'Conditional Formatting', ''];
        const noComment = ['', 'Format Special Char'];
        const heads = ['PY', 'Policy<br>Year', 'Claim<br>Number', 'Incident Date', 'SSN', 'First<br>Name', 'Last<br>Name', 'Full Name', 'Text to columns', 'Open Date', 'Closed<br>Date', 'Claimant Type', 'Status', 'Incident<br>Type', 'Total Paid', 'Remaining<br>Reserves', 'Total Incurred', 'MR'];
        const yellow = [0, 4, 5, 6, 7, 8];
        const claimants = {
            R: 'FP: All Risk Perils', F: 'FP: Fire', B: 'GL: General Bodily Injury', E: 'GL: Errors And Omissions',
            P: 'GL: General Property', A: 'GL: Auto Collision', D: 'AL: Auto Property Damage'
        };

        // claim | incident | open | closed | claimant | status | type | paid | reserves | incurred | next column
        const claims = `123456|9/10/2020|10/19/2020|5/11/2023|R|Closed|P|397,481.65|0.00|397,481.65|15
123457|1/13/2021|1/20/2021||B|Open|L|25,047.31|274,952.69|300,000.00|2
123458|1/3/2021|1/3/2023||R|Open|P|0.00|175,000.00|175,000.00|10
123459|5/28/2021|6/18/2021||R|Open|P|61,213.65|100,259.22|161,472.87|2
123460|5/1/2021|6/15/2023||E|Open|L|294.60|149,705.40|150,000.00|5
123461|6/1/2021|1/31/2023||E|Open|L|6,940.02|48,059.98|55,000.00|2
123462|12/2/2020|6/14/2021|3/29/2023|B|Closed|L|4,622.50|0.00|4,622.50|
123463|6/15/2021|8/12/2021|5/26/2023|E|Closed|L|1,104.50|0.00|1,104.50|2
123465|7/28/2020|8/13/2020|8/11/2021|D|Closed|L|0.00|0.00|0.00|10
123466|1/15/2021|6/24/2021|3/7/2022|D|Closed|L|0.00|0.00|0.00|10
123467|4/1/2022|11/4/2022||B|Open|L|273,660.00|100,000.00|373,660.00|5
123468|4/6/2022|4/7/2022||B|Open|L|893.80|174,106.20|175,000.00|2
123469|6/30/2022|9/12/2022||B|Open|L|58,167.72|116,832.28|175,000.00|2
123470|8/31/2021|11/14/2022||B|Open|L|0.00|150,000.00|150,000.00|10
123471|12/28/2021|6/8/2022||P|Open|L|5,632.50|144,367.50|150,000.00|5
123472|2/4/2022|3/17/2022||B|Open|L|0.00|150,000.00|150,000.00|10
123473|9/1/2021|9/8/2022||D|Open|L|0.00|125,000.00|125,000.00|2
123474|10/1/2021|9/20/2023||A|Open|L|0.00|125,000.00|125,000.00|2
123475|10/1/2021|4/1/2022||D|Open|L|0.00|125,000.00|125,000.00|10
123476|5/4/2022|10/31/2022||D|Open|L|15,936.28|109,063.72|125,000.00|1
123477|6/1/2022|5/26/2023||B|Open|L|0.00|115,000.00|115,000.00|2
123478|4/29/2022|5/5/2022||A|Open|L|0.00|40,000.00|40,000.00|1
123479|6/3/2022|8/17/2022|11/30/2023|D|Closed|L|36,417.28|0.00|36,417.28|5
123480|10/21/2021|11/9/2021|1/30/2023|D|Closed|L|5,032.97|0.00|5,032.97|2
123481|6/8/2022|6/27/2022|10/4/2023|R|Closed|P|5,015.48|0.00|5,015.48|2
123482|4/1/2022|12/1/2022|12/21/2023|R|Closed|P|3,047.00|0.00|3,047.00|2
123483|4/5/2022|11/21/2022|9/29/2023|B|Closed|L|621.50|0.00|621.50|2
123484|11/29/2021|3/30/2022|6/29/2023|B|Closed|L|141.00|0.00|141.00|
123485|7/22/2021|8/2/2021|1/18/2023|P|Closed|L|0.00|0.00|0.00|10
123486|9/28/2021|10/4/2021|3/20/2022|F|Closed|P|0.00|0.00|0.00|10
123487|10/1/2021|12/15/2021|11/16/2022|P|Closed|L|0.00|0.00|0.00|2
123488|1/27/2022|5/18/2022|10/28/2022|D|Closed|L|0.00|0.00|0.00|10
123489|2/14/2022|11/14/2022|12/29/2023|D|Closed|L|0.00|0.00|0.00|10`.split('\n').map(line => line.split('|'));

        function rowHead(n) {
            const look = n === 5
                ? 'border-r-2 border-b border-r-[#217346] border-b-[#cfcfcf] bg-[#d2d2d2] text-[#217346]'
                : 'border-r border-b border-r-[#999] border-b-[#cfcfcf] bg-[#e6e6e6]';
            return `<th class="p-0 pr-1 align-bottom text-center font-normal leading-[19px] ${look}">${n}</th>`;
        }

        function cell(value, col, extra = '') {
            const align = !rightCols.includes(col) ? 'text-left pl-[3px]' : col === 17 ? 'text-right' : 'text-right pr-[3px]';
            return `<td class="relative border-r border-b border-[#d4d4d4] bg-white p-0 align-bottom leading-[19px] whitespace-nowrap ${align}">${value}${extra}</td>`;
        }

        // column letters
        document.getElementById('letters').innerHTML = `<tr class="h-[19px]">
            <th class="border-r border-b border-[#999] bg-[#e6e6e6] p-0"><svg class="ml-auto mr-0.5 size-3" viewBox="0 0 12 12" fill="#217346"><path d="M12 0v12H0z"/></svg></th>` +
            letters.map(l => l === 'H'
                ? '<th class="border-r border-b-2 border-r-[#b5b3b1] border-b-[#217346] bg-[#d2d2d2] p-0 pt-px font-normal leading-4 text-[#217346]">H</th>'
                : `<th class="border-r border-b border-r-[#c4c4c4] border-b-[#999] bg-[#e6e6e6] p-0 pt-0.5 font-normal leading-4">${l}</th>`).join('') + '</tr>';

        let html = '';

        // rows 1 to 3
        for (let n = 1; n <= 3; n++) {
            html += `<tr class="h-5">${rowHead(n)}` + letters.map((l, i) => {
                const note = n === 1 ? notes[i] : '';
                const flag = noComment.includes(note) ? '' : '<svg class="absolute top-0 right-0 size-[7px]" viewBox="0 0 7 7" fill="#d01f2b"><path d="M0 0h7v7z"/></svg>';
                return `<td class="relative border-r border-b border-[#d4d4d4] bg-white p-0 pl-[3px] align-bottom leading-[19px] whitespace-nowrap">${note}${flag}</td>`;
            }).join('') + '</tr>';
        }

        // header row of the data
        html += `<tr class="h-[43px]">${rowHead(4)}` + heads.map((h, i) => {
            const fill = yellow.includes(i) ? 'bg-[#ffc000] text-[#1a1a1a]' : 'bg-[#404040] text-white';
            return `<th class="border-b-[3px] border-double border-black p-0 pl-[3px] text-left align-bottom leading-5 font-bold whitespace-nowrap ${fill}">${h}</th>`;
        }).join('') + '</tr>';

        // claims
        const selection = '<span class="absolute -top-0.5 -right-0.5 -bottom-0.5 -left-0.5 z-10 border-2 border-[#217346]"></span><span class="absolute -right-1 -bottom-1 z-10 size-1.5 border-t border-l border-white bg-[#217346]"></span>';
        const fillOptions = '<span class="absolute top-0 left-px flex h-[19px] w-[19px] items-center justify-center border border-[#b5b3b1] bg-white"><svg class="size-4" viewBox="0 0 16 16" fill="none" stroke="#888"><path d="M2.500 2.500h12v8h-12zM8 2v8M2 6.500h12" /><path d="M3 3h5v3H3z" fill="#4a6fd0"/><path d="M1 14.500h8" stroke-dasharray="1 1"/><path d="M13 11v5M10.500 13.500h5"/></svg></span>';
        claims.forEach((c, i) => {
            const n = i + 5;
            const [claim, incident, open, closed, claimant, status, type, paid, reserves, incurred, next] = c;
            const values = [i < 10 ? '2020-2021' : '2021-2022', i < 10 ? '2021' : '2022', claim, incident, '999991234', 'John' + (i + 1), 'Doe' + (i + 1), i ? '' : 'Doe1,John1', '',
                open, closed, claimants[claimant], status, type === 'P' ? 'P: Property' : 'L: Liability', paid, reserves, incurred, next];
            html += `<tr class="${n === 5 ? 'h-[21px]' : 'h-5'}">${rowHead(n)}` +
                values.map((v, col) => cell(v, col, n === 5 && col === 7 ? selection : n === 37 && col === 5 ? fillOptions : '')).join('') + '</tr>';
        });
        document.getElementById('cells').innerHTML = html;

        // office style icon: coloured page with a letter tile in front
        const office = (letter, dark, mid, light) => `<rect x="8" y="2" width="18" height="24" rx="2" fill="${mid}"/><path d="M17 2h7a2 2 0 012 2v6h-9z" fill="${light}"/><path d="M8 18h18v6a2 2 0 01-2 2H10a2 2 0 01-2-2z" fill="${dark}"/><rect x="1" y="8" width="14" height="13" rx="1" fill="${dark}"/><text x="8" y="18.500" text-anchor="middle" font-size="11" font-weight="700" fill="#fff">${letter}</text>`;
        const teams = '<circle cx="15" cy="6" r="4" fill="#7b83eb"/><circle cx="23" cy="8" r="3" fill="#5059c9"/><path d="M18 11h9v8a5 5 0 01-7 4z" fill="#5059c9"/><path d="M8 11h14v8c0 9-13 9-14 1z" fill="#7b83eb"/><rect x="1" y="8" width="13" height="13" rx="1" fill="#4b53bc"/><text x="7.500" y="18.500" text-anchor="middle" font-size="11" font-weight="700" fill="#fff">T</text>';

        const apps = [
            ['Start', '', '<path d="M6 8l7-1v7H6zM14 7l8-1v8h-8zM6 15h7v7l-7-1zM14 15h8v8l-8-1z" fill="#fff"/>'],
            ['Search', '', '<circle cx="16" cy="11" r="8" fill="none" stroke="#fff" stroke-width="2"/><path d="M10 17l-7 8" stroke="#fff" stroke-width="2.500"/>'],
            ['Calculator', '', '<rect x="5" y="2" width="18" height="24" rx="1" fill="#7d8791"/><path d="M7 4h14v5H7z" fill="#50d0f0"/><path d="M7 11h4v4H7zM12 11h4v4h-4zM17 11h4v3h-4zM7 16h4v4H7zM12 16h4v4h-4zM7 21h4v4H7zM12 21h4v4h-4z" fill="#dfe4ea"/><path d="M17 15h4v10h-4z" fill="#1c3f8c"/>'],
            ['Snipping Tool', '', '<ellipse cx="13" cy="13" rx="11" ry="7" transform="rotate(-22 13 13)" fill="#c9474f"/><ellipse cx="13" cy="10.500" rx="11" ry="7" transform="rotate(-22 13 10.500)" fill="#f4f1f1"/><path d="M11 11l7 7M19 5l-2 13M12 6l6 9" stroke="#8d9196" stroke-width="1.500"/><circle cx="16" cy="22" r="3" fill="none" stroke="#2b88d8" stroke-width="2"/><circle cx="22" cy="20" r="3" fill="none" stroke="#2b88d8" stroke-width="2"/>'],
            ['Snip & Sketch', '', '<path d="M6 6c3-5 14-5 16 3 1 6-2 11-7 11z" fill="#c8451c"/><path d="M9 7l6 12V5z" fill="#2b2c28"/><path d="M14 3v14M8 8l7 12M20 11l-7 9" stroke="#dfe2e5" stroke-width="2.500"/><circle cx="8" cy="22" r="3" fill="none" stroke="#2b88d8" stroke-width="2"/><circle cx="16" cy="22.500" r="3" fill="none" stroke="#2b88d8" stroke-width="2"/>'],
            ['Edge', 'run', '<circle cx="14" cy="14" r="12" fill="#1383d8"/><path d="M2 13C3 2 16-2 23 5c5 6 3 13-4 12-5 0-5-3-4-5-1-5-9-4-13 1z" fill="#3cc6a0"/><path d="M9 17c-1-5 4-8 7-5-2 3 0 7 5 6 2 0 3 0 4-1-3 8-14 10-16 0z" fill="#0a4d92"/><rect x="1" y="18" width="13" height="8" rx="1" fill="#e8912d"/><path d="M5 18v-2h5v2M1 22h13" stroke="#8a4b10" fill="none"/>'],
            ['Chrome', 'run', '<circle cx="14" cy="14" r="12" fill="#fbc116"/><path d="M14 14L3.600 8A12 12 0 0124.400 8z" fill="#e33b2e"/><path d="M3.600 8a12 12 0 0010 18l5-9-5-3z" fill="#2da94f"/><circle cx="14" cy="14" r="6" fill="#fff"/><circle cx="14" cy="14" r="4.500" fill="#3a7de8"/>'],
            ['File Explorer', 'run', '<path d="M3 5h9l2 2h11v16H3z" fill="#e8a92e"/><path d="M3 8h22v15H3z" fill="#fbd970"/><path d="M7 24v-8h14v8h-4v-4h-6v4z" fill="#4a8fc8"/>'],
            ['Power BI', '', '<rect x="14" y="2" width="9" height="24" rx="1" fill="#d9a310"/><rect x="9" y="8" width="9" height="18" rx="1" fill="#f0c52e"/><rect x="4" y="14" width="9" height="12" rx="1" fill="#f9dd66"/>'],
            ['Paint', '', '<path d="M2 16c0-7 7-10 14-8 7 1 9 7 6 11-3 2-5 0-6 3-1 5-14 4-14-6z" fill="#d3e6f0" stroke="#8fb4c8"/><circle cx="7" cy="13" r="2" fill="#d9342b"/><circle cx="13" cy="11" r="2" fill="#7fc04a"/><circle cx="7" cy="19" r="2" fill="#d9342b"/><circle cx="13" cy="17" r="2" fill="#233"/><path d="M24 4l-7 13" stroke="#d9a875" stroke-width="4"/><path d="M17 16l-3 7" stroke="#a3662e" stroke-width="2"/>'],
            ['Acrobat', '', '<rect x="3" y="3" width="22" height="22" fill="#2a0507" stroke="#d8232a" stroke-width="1.500"/><path d="M8 20c3-2 6-7 6-12 0-2-2-1-1 1 1 4 5 8 8 8 1-1-1-2-4-1-4 0-8 2-9 4z" fill="none" stroke="#fff" stroke-width="1.300"/>'],
            ['Firefox', '', '<path d="M14 26C6 26 2 20 2 14c0-4 2-7 4-9l1 3 4-1c1-3 3-4 5-5 0 3 2 4 4 5l2-2c3 3 4 6 4 9 0 7-5 12-12 12z" fill="#ff5f3c"/><path d="M16 2c0 3 2 4 4 5l2-2c5 6 5 14-1 18 2-8-3-11-5-15-1-2-1-4 0-6z" fill="#ffc531"/><circle cx="14" cy="14" r="5" fill="#7a3fc4"/><path d="M7 11c4-2 5 1 8 1-1 3-4 1-4 4 2 3 6 1 8-1-1 8-13 7-12-4z" fill="#ff9a2e"/>'],
            ['Browser', '', '<circle cx="14" cy="14" r="11" fill="#d4e4e8"/><path d="M5 8c4-6 13-7 18-1 1 3 2 6 1 9-3-2-3-7-8-7-4 0-5 3-3 6-5 0-8-3-8-7z" fill="#4f9d52"/><path d="M16 9c5 0 8 3 8 8-2 5-6 8-9 8 4-4 4-7 2-10-2-2-3-5-1-6z" fill="#3c8ec4"/><path d="M12 6c2 2 0 4-2 4" stroke="#f4f8f8" stroke-width="2" fill="none"/>'],
            ['Spotify', 'run', '<circle cx="14" cy="14" r="11.500" fill="#1ed760"/><path d="M7 10c5-2 10-1 14 1M8 14c4-1 8-1 12 2M8.500 18c4-1 7 0 10 1.500" fill="none" stroke="#1c2a20" stroke-width="2" stroke-linecap="round"/>'],
            ['Outlook', 'alert', office('O', '#0f5ea8', '#2a9be8', '#5cc0f5')],
            ['Excel', 'active', office('X', '#10703c', '#21a366', '#33c481')],
            ['Word', 'run', office('W', '#174ea0', '#2b7cd3', '#41a5ee')],
            ['Teams', '', teams],
            ['Printer', '', '<path d="M2 2h24v24H2z" fill="#0f96d4"/><path d="M9 12V7h8v5M7 18V11h13v4M7 18h4M12 15h4v7h-4zM18 17h4v5h-4zM13 18h2M19 19h2" fill="none" stroke="#fff"/>'],
            ['PowerPoint', '', '<circle cx="16" cy="14" r="11.500" fill="#e8623f"/><path d="M16 2.500A11.500 11.500 0 0127.500 14H16z" fill="#ff9a78"/><path d="M4.500 14h23a11.500 11.500 0 01-23 0z" fill="#c63f22"/><rect x="1" y="8" width="13" height="13" rx="1" fill="#b7351b"/><text x="7.500" y="18.500" text-anchor="middle" font-size="11" font-weight="700" fill="#fff">P</text>'],
            ['Teams meeting', 'run', teams + '<path d="M9 20h6v6H9z" fill="#101d2c" stroke="#40c8f0"/><circle cx="20" cy="20" r="8" fill="#d42f2f"/><text x="20" y="24.500" text-anchor="middle" font-size="12" fill="#fff">2</text>'],
            ['Zoom', 'alert', '<circle cx="14" cy="14" r="12" fill="#0b5cff"/><text x="14" y="18" text-anchor="middle" font-size="13" font-weight="700" fill="#fff">zm</text>']
        ];
        const states = {
            '': ['', 'hidden'],
            run: ['', 'w-10 bg-[#76b9ed]'],
            active: ['bg-[#555650]', 'w-12 bg-[#76b9ed]'],
            alert: ['bg-[#b0652a]', 'w-12 bg-[#ff7a1a]']
        };
        document.getElementById('taskbar').innerHTML = apps.map(([name, state, art]) =>
            `<button aria-label="${name}" class="relative mr-px flex h-10 w-12 items-center justify-center ${states[state][0]}"><svg class="size-7" viewBox="0 0 28 28">${art}</svg><span class="absolute bottom-0 h-0.5 ${states[state][1]}"></span></button>`).join('');
    </script>
</body>
</html>
